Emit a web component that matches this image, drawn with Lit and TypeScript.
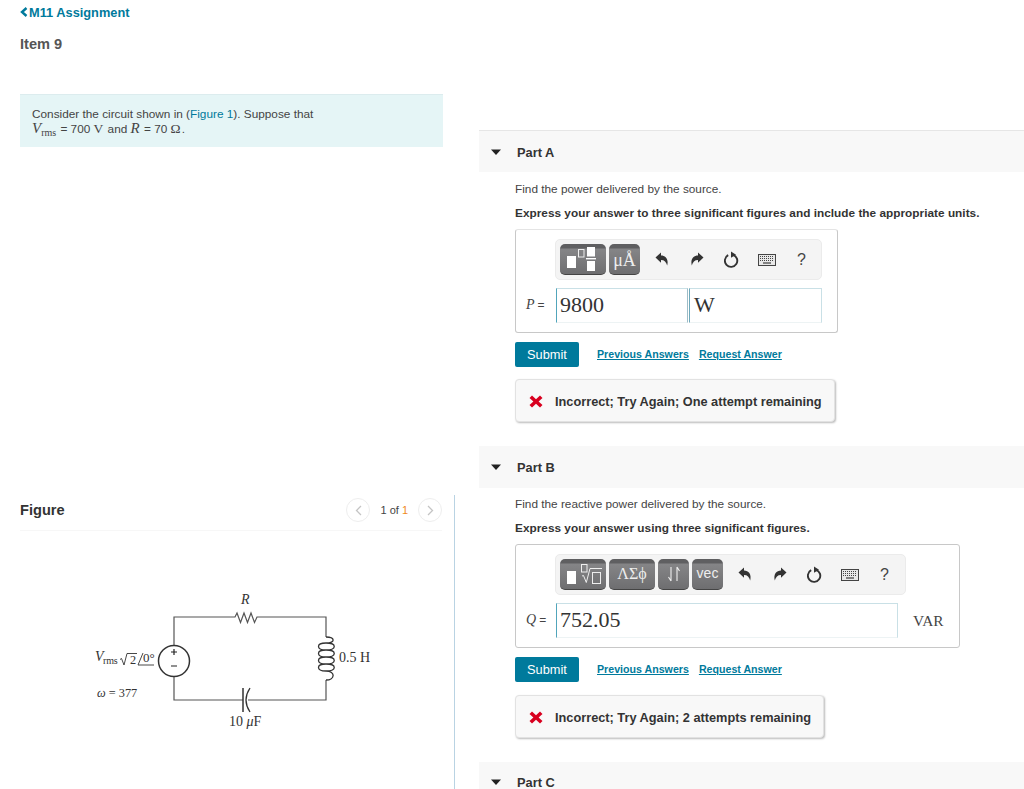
import { LitElement, html, css, svg } from "lit";
import { customElement } from "lit/decorators.js";

const undo = html`<svg width="14" height="15" viewBox="0 0 14 15"><path d="M0.5 5.5 L6 0.5 V3.5 C10.5 3.5 13.8 7 12.2 13.5 C11.2 10 9.5 8 6 8 V10.8 Z" fill="#333"/></svg>`;
const redo = html`<svg width="14" height="15" viewBox="0 0 14 15"><path d="M13.5 5.5 L8 0.5 V3.5 C3.5 3.5 0.2 7 1.8 13.5 C2.8 10 4.5 8 8 8 V10.8 Z" fill="#333"/></svg>`;
const reset = html`<svg width="16" height="17" viewBox="0 0 16 17"><path d="M4.2 4.2 A6.2 6.2 0 1 0 9 3.8" fill="none" stroke="#333" stroke-width="1.9"/><path d="M7 0.4 L12 3.8 L7 6.8 Z" fill="#333"/></svg>`;
const keyboard = html`<svg width="18" height="12" viewBox="0 0 18 12"><rect x="0.5" y="0.5" width="17" height="11" fill="#e8e8e8" stroke="#444"/><path d="M2 2.5 H16 M2 4.5 H16 M2 6.5 H16" stroke="#444" stroke-width="1" stroke-dasharray="1 1"/><path d="M5 9 H13" stroke="#555" stroke-width="1.4"/></svg>`;
const xMark = html`<svg class="x" width="14" height="13" viewBox="0 0 14 13"><path d="M0.5 3 L3 0.5 L7 4.2 L11 0.5 L13.5 3 L9.6 6.5 L13.5 10 L11 12.5 L7 8.8 L3 12.5 L0.5 10 L4.4 6.5 Z" fill="#d8001f"/></svg>`;
const caret = html`<svg class="caret" width="10" height="6" viewBox="0 0 10 6"><path d="M0 0.5 H10 L5 6 Z" fill="#222"/></svg>`;

const fracIcon = html`<svg width="46" height="31" viewBox="0 0 46 31"><rect x="7" y="12" width="9" height="12" fill="#fff"/><rect x="18.5" y="5.5" width="5.5" height="7.5" fill="none" stroke="#eee"/><rect x="27" y="3" width="8" height="9.5" fill="#fff"/><rect x="26" y="14" width="10" height="1.4" fill="#fff"/><rect x="27" y="17" width="8" height="10" fill="#fff"/></svg>`;
const rootIcon = html`<svg width="46" height="31" viewBox="0 0 46 31"><rect x="7" y="12" width="9" height="13" fill="#fff"/><rect x="21.5" y="5.5" width="5.5" height="7.5" fill="none" stroke="#eee"/><path d="M22 17 L23.5 16.5 L26.3 23.5 L30 9.5 H42" fill="none" stroke="#eee"/><rect x="32.5" y="13.5" width="8" height="11" fill="none" stroke="#eee"/></svg>`;
const arrowsIcon = html`<svg width="14" height="16" viewBox="0 0 14 16"><path d="M4 1 V15 M4 15 L1.5 11 M10 15 V1 M10 1 L12.5 5" fill="none" stroke="#eee" stroke-width="1.1"/></svg>`;

const circuit = svg`
  <g fill="none" stroke="#555" stroke-width="1.2">
    <path d="M94 60.5 V32 H155 L157 28 L160.5 37.5 L164 28 L167.5 37.5 L171 28 L174.5 37.5 L177 32 H246 V52"/>
    <path d="M94 91.5 V115 H163"/>
    <path d="M168 115 H246 V95"/>
    <circle cx="94" cy="76" r="15.5" stroke="#333" stroke-width="1.5"/>
    <path d="M163 103 V127" stroke="#333" stroke-width="1.5"/>
    <path d="M170 103 Q162 115 170 127" stroke="#333" stroke-width="1.3"/>
    <path d="M246 52 C255 52 256 58 246 58 C236 58 236 65 246 65 C257 65 257 58 246 58 M246 65 C236 65 236 72 246 72 C257 72 257 65 246 65 M246 72 C236 72 236 79 246 79 C257 79 257 72 246 72 M246 79 C236 79 236 86 246 86 C257 86 257 79 246 79 M246 86 C256 86 255 95 246 95" stroke="#333" stroke-width="1.3"/>
    <path d="M91 67 H97 M94 64 V70 M91 81 H97" stroke="#222"/>
    <path d="M40 74.5 L41.5 73.5 L44 80 L47 68.5 H57" stroke="#333" stroke-width=".9"/>
    <path d="M58 80 H74 M58 80 L63 68" stroke="#333" stroke-width=".9"/>
  </g>
  <g class="ct">
    <text x="161" y="19" class="i">R</text>
    <text x="15" y="76" class="i">V</text>
    <text x="23" y="79" class="sm">rms</text>
    <text x="50" y="78.5" class="w">2</text>
    <text x="63" y="77" class="z">0°</text>
    <text x="17" y="112" class="w"><tspan class="i w">ω</tspan> = 377</text>
    <text x="259" y="77">0.5 H</text>
    <text x="149" y="141">10 <tspan class="i">μ</tspan>F</text>
  </g>`;

type Part = {
  id: string;
  q: string;
  ask: string;
  sym: string;
  value: string;
  unit: string;
  fb: string;
};

@customElement("app-root")
export class AppRoot extends LitElement {
  static styles = css`
    :host {
      display: block;
      width: 1024px;
      height: 789px;
      overflow: hidden;
      background: #fff;
      font-family: "Liberation Sans", Arial, sans-serif;
      font-size: 12px;
      color: #333;
    }
    .page { display: flex; height: 789px; }
    .left { width: 479px; flex: none; padding-left: 20px; box-sizing: border-box; }
    .back {
      display: flex; align-items: center; gap: 1px;
      height: 14px; margin-top: 5px; font-size: 12.8px; font-weight: bold; color: #007a9c;
    }
    .item { margin-top: 17px; height: 16px; line-height: 16px; font-size: 14.6px; font-weight: bold; color: #555; }
    .intro {
      margin-top: 42px; width: 423px; height: 53px; box-sizing: border-box;
      background: #e5f5f6; border-top: 1px solid #dcecee;
      padding: 12px 0 0 12px; font-size: 11.8px; line-height: 14px; color: #444;
    }
    .intro a { color: #007a9c; }
    .m { font-family: "Liberation Serif", serif; font-size: 13.5px; margin-right: 1px; }
    .m i { font-size: 15px; }
    .m sub { font-size: 10px; line-height: 0; vertical-align: -3px; }
    .figure-panel { margin-top: 348px; width: 434px; height: 294px; box-sizing: content-box; border-right: 1px solid #b9d3e3; }
    .fig-head { display: flex; align-items: center; height: 30px; padding-right: 12px; }
    .fig-title { flex: 1; font-size: 14.6px; font-weight: bold; color: #333; }
    .pager { display: flex; align-items: center; gap: 10px; font-size: 11px; color: #444; }
    .pager .n { color: #f08a1c; }
    .circle {
      width: 24px; height: 24px; border: 1px solid #eee; border-radius: 50%; box-sizing: border-box;
      display: flex; align-items: center; justify-content: center;
    }
    .rule { margin-top: 5px; margin-right: 12px; border-top: 1px solid #f7f7f7; }
    svg.circuit { display: block; margin: 54px 0 0 60px; }
    .ct text { font-family: "Liberation Serif", serif; font-size: 14px; fill: #333; }
    .ct .i { font-style: italic; }
    .ct .sm { font-size: 10px; letter-spacing: -.2px; }
    .ct .w { font-size: 12.3px; }
    .ct .z { font-size: 13px; }

    .right { flex: 1; min-width: 0; padding-top: 130px; }
    .part { margin-bottom: 23px; }
    .part-head {
      display: flex; align-items: center; height: 42px; box-sizing: border-box;
      background: #f8f8f8; background-clip: padding-box; border-top: 1px solid transparent;
      padding: 1px 0 0 12px; font-size: 12.8px; font-weight: bold; color: #333;
    }
    .part.a .part-head { border-top-color: #e6e6e6; }
    .part.b .part-head { height: 43px; padding-bottom: 1px; }
    .part.b .q { margin-top: 9px; }
    .part.c .part-head { padding-top: 0; padding-bottom: 1px; }
    .part-head .caret { margin-right: 16px; }
    .part-body { padding-left: 36px; }
    .q { margin-top: 10px; height: 14px; line-height: 14px; font-size: 11.8px; color: #444; }
    .ask { margin-top: 10px; height: 14px; line-height: 14px; font-size: 11.8px; font-weight: bold; color: #333; letter-spacing: .02px; }
    .answer {
      margin-top: 9px; box-sizing: border-box; padding: 9px 15px 0 9px; height: 104px;
      border: 1px solid #c8c8c8; border-radius: 3px; display: flex; flex-direction: column; gap: 8px;
    }
    .answer.a { width: 323px; border-top-color: #e4e4e4; }
    .answer.b { width: 445px; }
    .toolbar {
      display: flex; align-items: center; box-sizing: border-box; height: 41px; margin-left: 30px;
      background: #f4f4f4; border: 1px solid #ebebeb; border-radius: 5px; padding: 0 4px;
    }
    .a .toolbar { width: 267px; }
    .b .toolbar { width: 351px; }
    .tb {
      height: 31px; box-sizing: border-box; border-radius: 5px; margin-right: 3px; color: #eee; flex: none;
      background: linear-gradient(#5f5f61 0 4px, #858587 5px, #6e6e70 100%); border-bottom: 1px solid #444;
      display: flex; align-items: center; justify-content: center;
      font-family: "Liberation Serif", serif; font-size: 16px;
    }
    .tb.unit-btn { font-size: 18px; padding-top: 3px; }
    .tb.sans { font-family: "Liberation Sans", sans-serif; font-size: 14px; padding-bottom: 3px; }
    .tb.w46 { width: 46px; }
    .tb.w31 { width: 31px; }
    .tools { display: flex; align-items: center; flex: none; margin-left: 1px; }
    .tool { width: 35px; display: flex; justify-content: center; font-size: 16px; color: #444; }
    .row { display: flex; align-items: stretch; height: 35px; }
    .lab { width: 31px; box-sizing: border-box; padding: 9px 0 0 1px; font-size: 12px; color: #444; white-space: nowrap; }
    .lab i { font-family: "Liberation Serif", serif; font-size: 14px; margin-right: 3px; }
    .inp {
      box-sizing: border-box; border: 1px solid #c9e0e6; border-left: 1px solid #51a5bb; border-bottom-color: #edf3f4;
      font-family: "Liberation Serif", serif; font-size: 22px; color: #333; padding: 3px 0 0 3px; line-height: 26px;
    }
    .a .v { width: 132px; border-right-color: #9dbdc8; }
    .a .u { width: 133px; margin-left: 1px; padding-left: 4px; border-left-color: #6fa9ba; }
    .b .v { width: 342px; }
    .unit { margin-left: 15px; padding-top: 9px; font-family: "Liberation Serif", serif; font-size: 15.4px; color: #444; }
    .actions { display: flex; align-items: center; margin-top: 9px; height: 25px; }
    .submit {
      width: 64px; height: 25px; background: #007a9c; color: #fff; border-radius: 2px;
      display: flex; align-items: center; justify-content: center; font-size: 12.8px; margin-right: 18px;
    }
    .actions a { color: #007a9c; font-size: 10.65px; font-weight: bold; text-decoration: underline; margin-right: 10px; padding-bottom: 2px; }
    .fb {
      display: inline-flex; align-items: center; box-sizing: border-box; height: 43px; margin-top: 12px;
      background: #f8f8f8; border: 1px solid #e2e2e2; border-radius: 4px; box-shadow: 1px 1px 2px #bbb;
      padding: 1px 12px 0 13px; font-size: 12.75px; font-weight: bold; color: #333;
    }
    .b .fb { margin-top: 13px; }
    .fb .x { margin-right: 12px; }
    .fb-wrap { display: flex; }
  `;

  private toolbar(id: string) {
    const btns =
      id === "a"
        ? html`<span class="tb w46">${fracIcon}</span><span class="tb w31 unit-btn">μÅ</span>`
        : html`<span class="tb w46">${rootIcon}</span><span class="tb w46">ΛΣϕ</span><span class="tb w31">${arrowsIcon}</span><span class="tb w31 sans">vec</span>`;
    return html`<div class="toolbar">
      ${btns}
      <div class="tools">
        <span class="tool">${undo}</span>
        <span class="tool">${redo}</span>
        <span class="tool">${reset}</span>
        <span class="tool">${keyboard}</span>
        <span class="tool">?</span>
      </div>
    </div>`;
  }

  private part(p: Part) {
    return html`<div class="part ${p.id}">
      <div class="part-head">${caret}Part ${p.id.toUpperCase()}</div>
      <div class="part-body">
        <div class="q">${p.q}</div>
        <div class="ask">${p.ask}</div>
        <div class="answer ${p.id}">
          ${this.toolbar(p.id)}
          <div class="row">
            <div class="lab"><i>${p.sym}</i>=</div>
            <div class="inp v">${p.value}</div>
            ${p.id === "a"
              ? html`<div class="inp u">${p.unit}</div>`
              : html`<div class="unit">${p.unit}</div>`}
          </div>
        </div>
        <div class="actions">
          <span class="submit">Submit</span>
          <a>Previous Answers</a><a>Request Answer</a>
        </div>
        <div class="fb-wrap"><div class="fb">${xMark}${p.fb}</div></div>
      </div>
    </div>`;
  }

  render() {
    return html`
      <div class="page">
        <div class="left">
          <div class="back">
            <svg width="8" height="10" viewBox="0 0 8 10"><path d="M6.5 1 L2 5 L6.5 9" fill="none" stroke="#007a9c" stroke-width="2.4"/></svg>
            <span>M11 Assignment</span>
          </div>
          <div class="item">Item 9</div>
          <div class="intro">
            Consider the circuit shown in (<a>Figure 1</a>). Suppose that<br />
            <span class="m"><i>V</i><sub>rms</sub></span> = 700 <span class="m">V</span> and <span class="m"><i>R</i></span> = 70 <span class="m">Ω</span>.
          </div>
          <div class="figure-panel">
            <div class="fig-head">
              <div class="fig-title">Figure</div>
              <div class="pager">
                <span class="circle"><svg width="7" height="11" viewBox="0 0 7 11"><path d="M6 1 L1.5 5.5 L6 10" fill="none" stroke="#c4c4c4" stroke-width="1.3"/></svg></span>
                <span>1 of <span class="n">1</span></span>
                <span class="circle"><svg width="7" height="11" viewBox="0 0 7 11"><path d="M1 1 L5.5 5.5 L1 10" fill="none" stroke="#c4c4c4" stroke-width="1.3"/></svg></span>
              </div>
            </div>
            <div class="rule"></div>
            <svg class="circuit" width="300" height="150" viewBox="0 0 300 150">${circuit}</svg>
          </div>
        </div>
        <div class="right">
          ${this.part({
            id: "a",
            q: "Find the power delivered by the source.",
            ask: "Express your answer to three significant figures and include the appropriate units.",
            sym: "P",
            value: "9800",
            unit: "W",
            fb: "Incorrect; Try Again; One attempt remaining",
          })}
          ${this.part({
            id: "b",
            q: "Find the reactive power delivered by the source.",
            ask: "Express your answer using three significant figures.",
            sym: "Q",
            value: "752.05",
            unit: "VAR",
            fb: "Incorrect; Try Again; 2 attempts remaining",
          })}
          <div class="part c"><div class="part-head">${caret}Part C</div></div>
        </div>
      </div>`;
  }
}
